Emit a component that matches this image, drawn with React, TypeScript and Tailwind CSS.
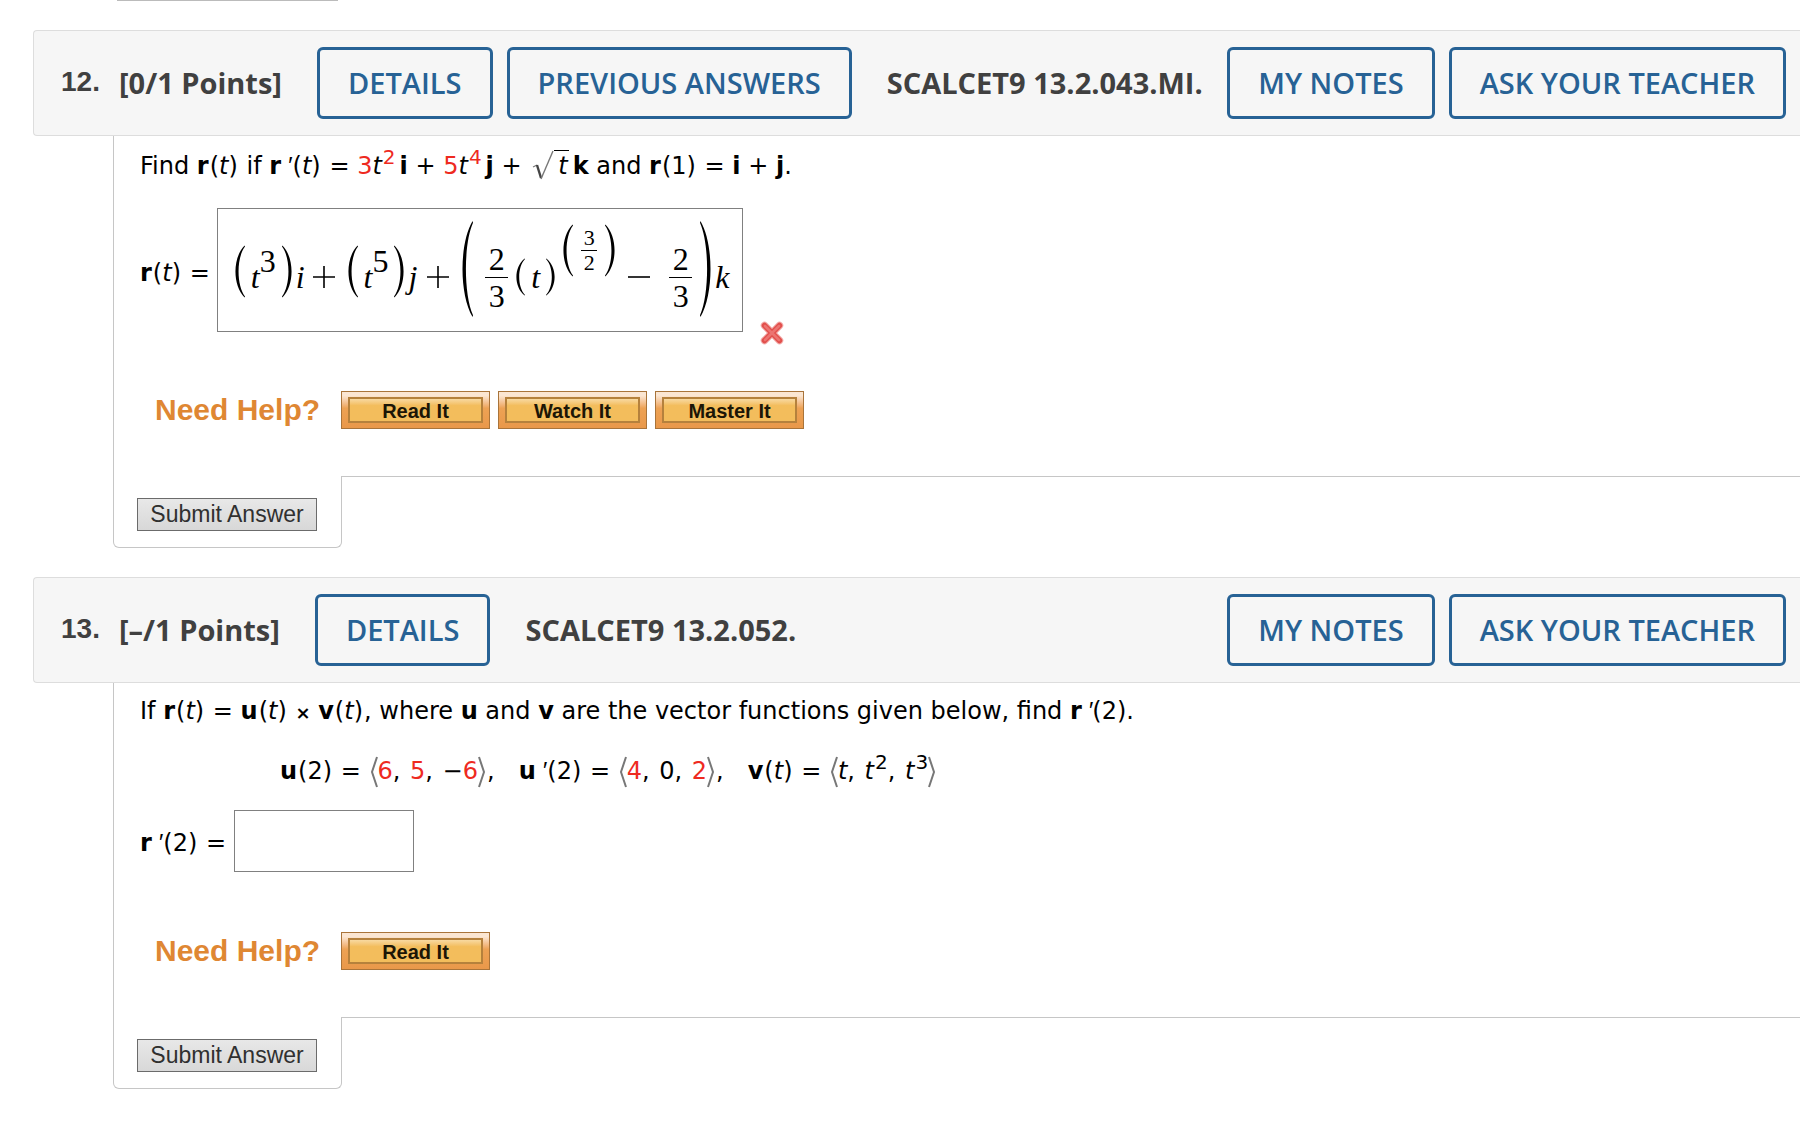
import type { ReactNode } from 'react';

const helpButtons = {
  q12: ['Read It', 'Watch It', 'Master It'],
  q13: ['Read It'],
};

function HeaderButton({ children }: { children: ReactNode }) {
  return (
    <button className="h-[72px] rounded-md border-3 border-[#276295] px-7 font-['Open_Sans'] text-[29px] font-semibold whitespace-nowrap text-[#276295]">
      {children}
    </button>
  );
}

type HeaderProps = {
  number: string;
  points: string;
  actions: string[];
  source: string;
};

function QuestionHeader({ number, points, actions, source }: HeaderProps) {
  return (
    <header className="ml-[33px] flex h-[106px] items-center rounded-l border border-r-0 border-[#dddddd] bg-[#f6f6f6] pr-[14px] pl-[27px] font-['Open_Sans'] text-[29px] font-bold whitespace-nowrap text-[#404040]">
      <span className="w-[58px] pb-[2px] font-['Liberation_Sans'] text-[28px]">{number}</span>
      <h2>{points}</h2>
      <div className="ml-[35px] flex gap-[14px]">
        {actions.map((action) => (
          <HeaderButton key={action}>{action}</HeaderButton>
        ))}
      </div>
      <span className="ml-[35px]">{source}</span>
      <div className="ml-auto flex gap-[14px]">
        <HeaderButton>MY NOTES</HeaderButton>
        <HeaderButton>ASK YOUR TEACHER</HeaderButton>
      </div>
    </header>
  );
}

function NeedHelp({ buttons }: { buttons: string[] }) {
  return (
    <div className="ml-[15px] flex h-[38px] items-center gap-2">
      <span className="w-[178px] font-['Liberation_Sans'] text-[30px] font-bold text-[#df8733]">
        Need Help?
      </span>
      {buttons.map((label) => (
        <button
          key={label}
          className="flex h-[38px] w-[149px] border border-[#a9743a] bg-linear-to-b from-[#fbe6d2] from-10% via-[#eda254] via-45% to-[#e9984a] px-[6px] py-[5px]"
        >
          <span className="flex h-full w-full items-center justify-center border-2 border-[#b5813c] bg-linear-to-b from-[#f8d9a0] to-[#f3bd5c] to-30% pt-px font-['Liberation_Sans'] text-[20px] font-bold text-[#1c1606]">
            {label}
          </span>
        </button>
      ))}
    </div>
  );
}

function SubmitBar() {
  return (
    <div className="ml-[113px] flex">
      <div className="w-[229px] rounded-b-md border border-t-0 border-[#c6c6c6] pt-[22px] pb-4 pl-[23px]">
        <button className="h-[33px] w-[180px] border border-[#6b6b6b] bg-linear-to-b from-[#e8e8e8] to-[#d8d8d8] font-['Liberation_Sans'] text-[23px] leading-[29px] text-[#303030]">
          Submit Answer
        </button>
      </div>
      <div className="flex-1 border-t border-[#c6c6c6]" />
    </div>
  );
}

function Sup({ children }: { children: ReactNode }) {
  return <span className="relative -top-[10px] ml-px text-[20px] leading-none">{children}</span>;
}

function Red({ children }: { children: ReactNode }) {
  return <span className="text-[#ee2a1f]">{children}</span>;
}

// function argument in parentheses, e.g. (t)
function Arg({ children }: { children: ReactNode }) {
  return <span className="mx-px">({children})</span>;
}

function Comma() {
  return <span className="mr-[2px]">,</span>;
}

function Prime() {
  return <i className="ml-[6px] font-['Liberation_Sans']">′</i>;
}

function Root() {
  return (
    <span className="ml-[3px] inline-flex items-end align-bottom">
      <svg className="h-8 w-[22px]" viewBox="0 0 22 32" fill="none">
        <path d="M1 17l4-2" stroke="#777" strokeWidth="1.2" />
        <path d="M5 15l4 13" stroke="#444" strokeWidth="2.4" />
        <path d="M9 29L21 1" stroke="#777" strokeWidth="1.4" />
      </svg>
      <i className="border-t border-black pr-px pl-1 leading-[31px]">t</i>
    </span>
  );
}

function Angle({ close }: { close?: boolean }) {
  return (
    <svg className="inline-block h-8 w-[9px] align-middle" viewBox="0 0 9 32" fill="none">
      <path d={close ? 'M1 1l5 15-5 15' : 'M8 1L3 16l5 15'} stroke="#777" strokeWidth="2" />
    </svg>
  );
}

const parenSizes = {
  sm: 'h-[38px] w-[9px]',
  md: 'h-[53px] w-[10px] mb-3',
  sup: 'h-[53px] w-[10px]',
  lg: 'h-[98px] w-[11px] mb-4',
};

function Paren({ size, close }: { size: keyof typeof parenSizes; close?: boolean }) {
  return (
    <svg className={parenSizes[size]} viewBox="0 0 10 50" preserveAspectRatio="none">
      <path
        d={
          close
            ? 'M0.4 0.5C12.6 12 12.6 38 0.4 49.5L0 48.6C8.6 38 8.6 12 0 1.4Z'
            : 'M9.6 0.5C-2.6 12 -2.6 38 9.6 49.5L10 48.6C1.4 38 1.4 12 10 1.4Z'
        }
      />
    </svg>
  );
}

function Fraction({ top, bottom, small }: { top: string; bottom: string; small?: boolean }) {
  return (
    <span className={small ? 'flex w-4 flex-col text-center text-[22px] leading-6' : 'flex w-[23px] flex-col text-center leading-9'}>
      <span className="border-b border-black">{top}</span>
      <span>{bottom}</span>
    </span>
  );
}

function Power({ exp }: { exp: string }) {
  return (
    <span className="mx-[6px] flex">
      <i>t</i>
      <span className="-mt-4 mb-4">{exp}</span>
    </span>
  );
}

function Plus({ minus }: { minus?: boolean }) {
  return (
    <svg className="h-[22px] w-[22px]" viewBox="0 0 22 22" stroke="#000" strokeWidth="1.6">
      <path d={minus ? 'M0 11h22' : 'M0 11h22M11 0v22'} />
    </svg>
  );
}

function AnswerMath() {
  return (
    <div
      id="answer-12"
      role="textbox"
      aria-label="r(t)"
      tabIndex={0}
      className="flex h-[124px] items-center border border-[#808080] pt-[14px] pr-[13px] pl-[17px] font-['Liberation_Serif'] text-[32px] leading-9"
    >
      <Paren size="md" />
      <Power exp="3" />
      <Paren size="md" close />
      <i className="mr-2 ml-1">i</i>
      <Plus />
      <span className="w-[13px]" />
      <Paren size="md" />
      <Power exp="5" />
      <Paren size="md" close />
      <i className="mr-[10px] ml-1">j</i>
      <Plus />
      <span className="w-[13px]" />
      <Paren size="lg" />
      <span className="mr-2 ml-3">
        <Fraction top="2" bottom="3" />
      </span>
      <Paren size="sm" />
      <i className="mx-[6px]">t</i>
      <Paren size="sm" close />
      <span className="mr-[13px] mb-[54px] ml-2 flex items-center">
        <Paren size="sup" />
        <span className="mx-2">
          <Fraction top="3" bottom="2" small />
        </span>
        <Paren size="sup" close />
      </span>
      <Plus minus />
      <span className="mr-2 ml-[19px]">
        <Fraction top="2" bottom="3" />
      </span>
      <Paren size="lg" close />
      <i className="ml-1">k</i>
    </div>
  );
}

function WrongMark() {
  return (
    <svg className="mt-[113px] ml-[17px] h-6 w-6" viewBox="0 0 24 24" role="img" aria-label="Incorrect">
      <path d="M4.5 4.5l15 15M19.5 4.5l-15 15" stroke="#f3b0ae" strokeWidth="7.5" strokeLinecap="round" />
      <path d="M4.5 4.5l15 15M19.5 4.5l-15 15" stroke="#e2504d" strokeWidth="5.5" strokeLinecap="round" />
      <path d="M5 5l14 14M19 5L5 19" stroke="#ec7471" strokeWidth="2.5" strokeLinecap="round" />
    </svg>
  );
}

export default function App() {
  return (
    <main className="overflow-hidden bg-white font-['DejaVu_Sans'] text-[24px] leading-8 text-black">
      <div className="ml-[117px] w-[221px] border-b border-[#bbbbbb]" />

      <section className="mt-[29px]">
        <QuestionHeader
          number="12."
          points="[0/1 Points]"
          actions={['DETAILS', 'PREVIOUS ANSWERS']}
          source="SCALCET9 13.2.043.MI."
        />
        <div className="ml-[113px] border-l border-[#c6c6c6] pt-[14px] pb-[47px] pl-[26px]">
          <p className="h-8 whitespace-nowrap">
            Find <b>r</b>
            <Arg>
              <i>t</i>
            </Arg>{' '}
            if <b>r</b>
            <Prime />
            <Arg>
              <i>t</i>
            </Arg>{' '}
            = <Red>3</Red>
            <i>t</i>
            <Sup>
              <Red>2</Red>
            </Sup>
            <b className="ml-1">i</b> + <Red>5</Red>
            <i>t</i>
            <Sup>
              <Red>4</Red>
            </Sup>
            <b className="ml-1">j</b> + <Root />
            <b className="ml-1">k</b> and <b>r</b>
            <Arg>1</Arg> = <b>i</b> + <b>j</b>.
          </p>
          <div className="mt-[26px] flex items-start">
            <span className="mt-[49px] mr-[7px]">
              <b>r</b>
              <Arg>
                <i>t</i>
              </Arg>{' '}
              =
            </span>
            <AnswerMath />
            <WrongMark />
          </div>
          <div className="mt-[46px]">
            <NeedHelp buttons={helpButtons.q12} />
          </div>
        </div>
        <SubmitBar />
      </section>

      <section className="mt-[29px]">
        <QuestionHeader number="13." points="[–/1 Points]" actions={['DETAILS']} source="SCALCET9 13.2.052." />
        <div className="ml-[113px] border-l border-[#c6c6c6] pt-3 pb-[47px] pl-[26px]">
          <p className="h-8 whitespace-nowrap">
            If <b>r</b>
            <Arg>
              <i>t</i>
            </Arg>{' '}
            = <b>u</b>
            <Arg>
              <i>t</i>
            </Arg>{' '}
            <b className="text-[18px]">×</b> <b>v</b>
            <Arg>
              <i>t</i>
            </Arg>
            , where <b>u</b> and <b>v</b> are the vector functions given below, find <b>r</b>
            <Prime />
            (2).
          </p>
          <p className="mt-7 ml-[140px] h-8 whitespace-nowrap">
            <b>u</b>
            <Arg>2</Arg> = <Angle />
            <Red>6</Red>
            <Comma /> <Red>5</Red>
            <Comma /> −<Red>6</Red>
            <Angle close />,<b className="ml-6">u</b>
            <Prime />
            <Arg>2</Arg> = <Angle />
            <Red>4</Red>
            <Comma /> 0<Comma /> <Red>2</Red>
            <Angle close />,<b className="ml-6">v</b>
            <Arg>
              <i>t</i>
            </Arg>{' '}
            = <Angle />
            <i>t</i>
            <Comma /> <i>t</i>
            <Sup>2</Sup>
            <Comma /> <i>t</i>
            <Sup>3</Sup>
            <Angle close />
          </p>
          <div className="mt-[23px] flex items-center">
            <label htmlFor="answer-13" className="mt-1 mr-2">
              <b>r</b>
              <Prime />
              <Arg>2</Arg> =
            </label>
            <input id="answer-13" type="text" className="h-[62px] w-[180px] border border-[#808080] px-3" />
          </div>
          <div className="mt-[60px]">
            <NeedHelp buttons={helpButtons.q13} />
          </div>
        </div>
        <SubmitBar />
      </section>
    </main>
  );
}
